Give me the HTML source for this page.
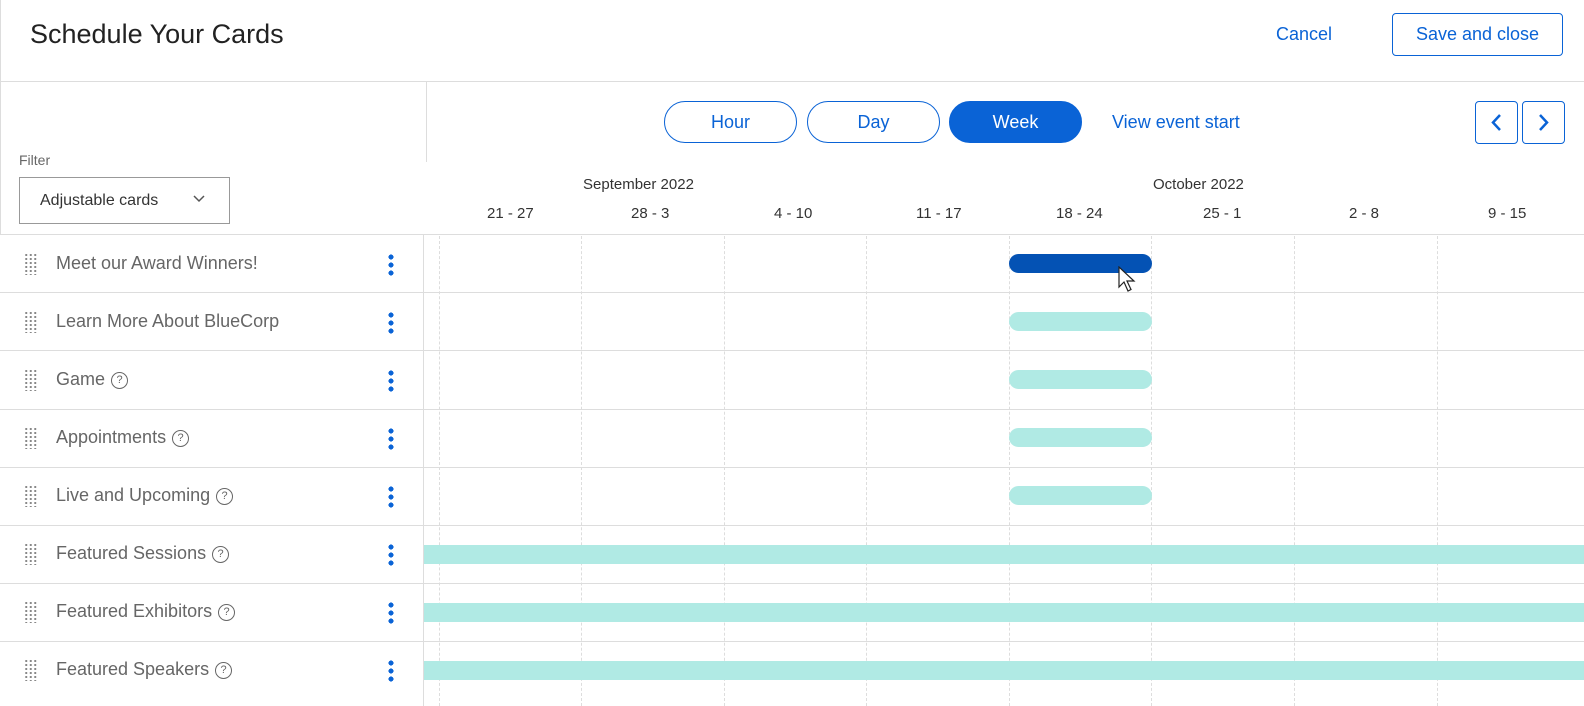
<!DOCTYPE html>
<html><head><style>
*{box-sizing:border-box;margin:0;padding:0}
body{width:1584px;height:706px;overflow:hidden;background:#fff;font-family:"Liberation Sans",sans-serif;position:relative;color:#333}
.a{position:absolute}
.btn{position:absolute;border:1px solid #0a63d6;border-radius:22px;color:#0a63d6;font-size:18px;text-align:center;line-height:40px;height:42px}
.vl{position:absolute;top:236px;height:470px;border-left:1px dashed #ddd}
.hl{position:absolute;left:0;width:1584px;border-top:1px solid #ddd}
.row{position:absolute;left:0;width:423px;height:58px}
.row .t{position:absolute;left:56px;top:18px;font-size:18px;color:#666}
.grip{position:absolute;left:24px;top:18px;width:14px;height:22px;background-image:radial-gradient(circle,#888 1px,transparent 1.2px);background-size:4.5px 4px}
.dots{position:absolute;left:388px;top:18px;width:6px;height:24px;background-image:radial-gradient(circle,#0a63d6 2.4px,transparent 2.6px);background-size:6px 8px}
.q{display:inline-block;width:17px;height:17px;border:1.3px solid #666;border-radius:50%;font-size:11px;line-height:15px;text-align:center;vertical-align:2px;margin-left:6px}
.bar{position:absolute;height:19px;border-radius:10px;background:#b0eae4}
</style></head><body>
<div class="a" style="left:0;top:0;width:1584px;height:82px;border-bottom:1px solid #ddd;border-left:1px solid #ddd"></div>
<div class="a" style="left:30px;top:19px;font-size:27px;color:#222">Schedule Your Cards</div>
<div class="a" style="left:1276px;top:24px;font-size:18px;color:#0a63d6">Cancel</div>
<div class="a" style="left:1392px;top:13px;width:171px;height:43px;border:1px solid #0a63d6;border-radius:4px;color:#0a63d6;font-size:18px;text-align:center;line-height:41px">Save and close</div>
<div class="a" style="left:426px;top:82px;height:80px;border-left:1px solid #ddd"></div>
<div class="a" style="left:0;top:82px;height:152px;border-left:1px solid #ddd"></div>
<div class="btn" style="left:664px;top:101px;width:133px">Hour</div>
<div class="btn" style="left:807px;top:101px;width:133px">Day</div>
<div class="btn" style="left:949px;top:101px;width:133px;background:#0a63d6;color:#fff">Week</div>
<div class="a" style="left:1112px;top:112px;font-size:18px;color:#0a63d6">View event start</div>
<div class="a" style="left:1475px;top:101px;width:43px;height:43px;border:1px solid #0a63d6;border-radius:4px"><svg width="41" height="41"><path d="M24 13l-7 7.5 7 7.5" fill="none" stroke="#0a63d6" stroke-width="2.5"/></svg></div>
<div class="a" style="left:1522px;top:101px;width:43px;height:43px;border:1px solid #0a63d6;border-radius:4px"><svg width="41" height="41"><path d="M17 13l7 7.5-7 7.5" fill="none" stroke="#0a63d6" stroke-width="2.5"/></svg></div>
<div class="a" style="left:19px;top:152px;font-size:14px;color:#666">Filter</div>
<div class="a" style="left:19px;top:177px;width:211px;height:47px;border:1px solid #999;font-size:16px;line-height:45px;padding-left:20px;color:#333">Adjustable cards<svg class="a" style="left:173px;top:17px" width="12" height="8"><path d="M1 1l5 5 5-5" fill="none" stroke="#555" stroke-width="1.5"/></svg></div>
<div class="a" style="left:583px;top:176px;font-size:15px">September 2022</div>
<div class="a" style="left:1153px;top:176px;font-size:15px">October 2022</div>
<div class="a" style="left:487px;top:205px;font-size:15px">21 - 27</div>
<div class="a" style="left:631px;top:205px;font-size:15px">28 - 3</div>
<div class="a" style="left:774px;top:205px;font-size:15px">4 - 10</div>
<div class="a" style="left:916px;top:205px;font-size:15px">11 - 17</div>
<div class="a" style="left:1056px;top:205px;font-size:15px">18 - 24</div>
<div class="a" style="left:1203px;top:205px;font-size:15px">25 - 1</div>
<div class="a" style="left:1349px;top:205px;font-size:15px">2 - 8</div>
<div class="a" style="left:1488px;top:205px;font-size:15px">9 - 15</div>
<div class="hl" style="top:234px"></div>
<div class="a" style="left:423px;top:234px;height:472px;border-left:1px solid #ddd"></div>
<div class="vl" style="left:439px"></div><div class="vl" style="left:581px"></div><div class="vl" style="left:724px"></div><div class="vl" style="left:866px"></div><div class="vl" style="left:1009px"></div><div class="vl" style="left:1151px"></div><div class="vl" style="left:1294px"></div><div class="vl" style="left:1437px"></div>
<div class="hl" style="top:292px"></div><div class="hl" style="top:350px"></div><div class="hl" style="top:409px"></div><div class="hl" style="top:467px"></div><div class="hl" style="top:525px"></div><div class="hl" style="top:583px"></div><div class="hl" style="top:641px"></div>
<div class="row" style="top:235px"><div class="grip"></div><div class="t">Meet our Award Winners!</div><div class="dots"></div></div>
<div class="row" style="top:293px"><div class="grip"></div><div class="t">Learn More About BlueCorp</div><div class="dots"></div></div>
<div class="row" style="top:351px"><div class="grip"></div><div class="t">Game<span class="q">?</span></div><div class="dots"></div></div>
<div class="row" style="top:409px"><div class="grip"></div><div class="t">Appointments<span class="q">?</span></div><div class="dots"></div></div>
<div class="row" style="top:467px"><div class="grip"></div><div class="t">Live and Upcoming<span class="q">?</span></div><div class="dots"></div></div>
<div class="row" style="top:525px"><div class="grip"></div><div class="t">Featured Sessions<span class="q">?</span></div><div class="dots"></div></div>
<div class="row" style="top:583px"><div class="grip"></div><div class="t">Featured Exhibitors<span class="q">?</span></div><div class="dots"></div></div>
<div class="row" style="top:641px"><div class="grip"></div><div class="t">Featured Speakers<span class="q">?</span></div><div class="dots"></div></div>
<div class="bar" style="left:1009px;top:254px;width:143px;background:#0452b4"></div>
<div class="bar" style="left:1009px;top:312px;width:143px"></div>
<div class="bar" style="left:1009px;top:370px;width:143px"></div>
<div class="bar" style="left:1009px;top:428px;width:143px"></div>
<div class="bar" style="left:1009px;top:486px;width:143px"></div>
<div class="bar" style="left:424px;top:545px;width:1160px;border-radius:0"></div>
<div class="bar" style="left:424px;top:603px;width:1160px;border-radius:0"></div>
<div class="bar" style="left:424px;top:661px;width:1160px;border-radius:0"></div>
<svg class="a" style="left:1117px;top:266px" width="22" height="28"><path d="M2 1v20l5-5 4 9 3-1.5-4-8.5h7z" fill="#fff" stroke="#222" stroke-width="1.2"/></svg>
</body></html>
